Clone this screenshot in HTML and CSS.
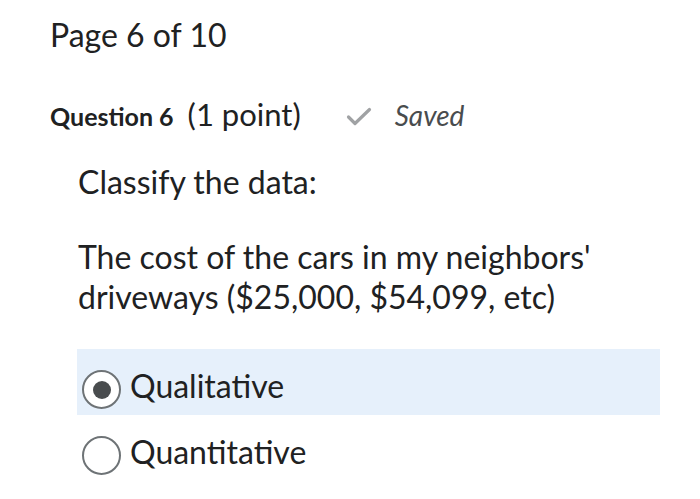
FILE: index.html
```html
<!DOCTYPE html>
<html lang="en">
<head>
<meta charset="utf-8">
<link rel="stylesheet" href="styles.css">
</head>
<body>
<div class="page">
  <h1 class="page-title">Page 6 of 10</h1>
  <div class="qhead">
    <span class="qlabel">Question 6</span>
    <span class="qpoints">(1 point)</span>
    <span class="saved">
      <svg class="check" width="26" height="20" viewBox="0 0 26 20"><path d="M2.5 10 L9 16.5 L23.5 2.5" fill="none" stroke="#a0a2a4" stroke-width="3.2" stroke-linecap="round" stroke-linejoin="round"/></svg>
      <span class="saved-text">Saved</span>
    </span>
  </div>
  <div class="qbody">
    <p class="prompt">Classify the data:</p>
    <p class="stem">The cost of the cars in my neighbors' driveways ($25,000, $54,099, etc)</p>
  </div>
  <div class="options">
    <div class="option selected">
      <span class="radio checked"></span>
      <span class="opt-text">Qualitative</span>
    </div>
    <div class="option">
      <span class="radio"></span>
      <span class="opt-text">Quantitative</span>
    </div>
  </div>
</div>
</body>
</html>
```
FILE: styles.css
```css
html, body {
  margin: 0;
  padding: 0;
  background: #fff;
}
body {
  font-family: Lato, "Liberation Sans", sans-serif;
  color: #202122;
}
.page {
  padding: 13px 20px 0 50px;
}
.page-title {
  margin: 0;
  font-weight: 400;
  font-size: 32px;
  line-height: 44px;
}
.qhead {
  display: flex;
  align-items: baseline;
  margin-top: 37px;
  line-height: 40px;
}
.qlabel {
  font-weight: 700;
  font-size: 25px;
}
.qpoints {
  font-size: 31px;
  margin-left: 14px;
}
.saved {
  display: flex;
  align-items: baseline;
  margin-left: 45px;
}
.check {
  align-self: center;
  margin-top: 4px;
}
.saved-text {
  font-style: italic;
  font-size: 28px;
  color: #494c4e;
  margin-left: 23px;
}
.qbody {
  margin-left: 28px;
  font-size: 32px;
  line-height: 40px;
  max-width: 560px;
}
.prompt {
  margin: 26px 0 0;
}
.stem {
  margin: 35px 0 0;
}
.options {
  margin: 32px 0 0 27px;
  width: 583px;
}
.option {
  box-sizing: border-box;
  display: flex;
  align-items: flex-start;
  height: 66px;
  padding: 17px 0 0 5px;
  font-size: 32px;
  line-height: 40px;
}
.option.selected {
  background: #e6f0fb;
}
.radio {
  box-sizing: border-box;
  width: 39px;
  height: 39px;
  margin-top: 4px;
  border: 2px solid #6e7376;
  border-radius: 50%;
  background: #fff;
  display: flex;
  align-items: center;
  justify-content: center;
  flex: none;
}
.radio.checked::after {
  content: "";
  width: 18px;
  height: 18px;
  border-radius: 50%;
  background: #494c4e;
}
.opt-text {
  margin-left: 9px;
}
```
